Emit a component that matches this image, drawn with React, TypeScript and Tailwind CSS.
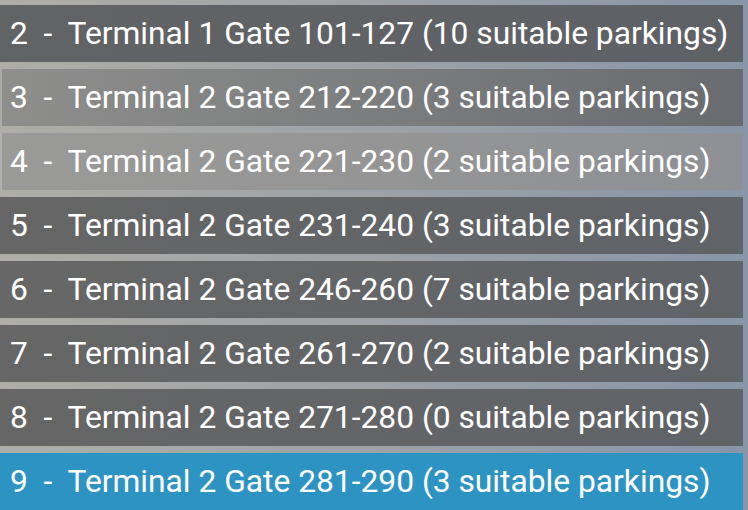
const rows = [
  { n: 2, label: 'Terminal 1 Gate 101-127', count: 10, cls: 'pl-[10px] bg-gradient-to-r from-[#626365] to-[#5e6166]' },
  { n: 3, label: 'Terminal 2 Gate 212-220', count: 3, cls: 'pl-[8px] bg-gradient-to-r from-[#8e8e8d] via-[#7c7d7e] to-[#696b70] border-l-2 border-[#a9a9a7]' },
  { n: 4, label: 'Terminal 2 Gate 221-230', count: 2, cls: 'pl-[8px] bg-gradient-to-r from-[#9a9a99] via-[#959595] to-[#8e9095] border-l-2 border-[#b0b0ae]' },
  { n: 5, label: 'Terminal 2 Gate 231-240', count: 3, cls: 'pl-[10px] bg-gradient-to-r from-[#666666] to-[#606368]' },
  { n: 6, label: 'Terminal 2 Gate 246-260', count: 7, cls: 'pl-[10px] bg-gradient-to-r from-[#676767] to-[#606368]' },
  { n: 7, label: 'Terminal 2 Gate 261-270', count: 2, cls: 'pl-[10px] bg-gradient-to-r from-[#666666] to-[#606368]' },
  { n: 8, label: 'Terminal 2 Gate 271-280', count: 0, cls: 'pl-[10px] bg-gradient-to-r from-[#666666] to-[#606368]' },
  { n: 9, label: 'Terminal 2 Gate 281-290', count: 3, cls: 'pl-[10px] bg-[#2d93c3]' },
];

export default function App() {
  return (
    <div className="w-[748px] h-[510px] overflow-hidden bg-gradient-to-r from-[#aeada8] via-[#9ea2a6] to-[#8795a8] pt-[5px] pr-[5px] flex flex-col gap-[7px]"
      style={{ fontFamily: 'Roboto, "Liberation Sans", sans-serif' }}>
      {rows.map(r => (
        <div key={r.n} className={`h-[57px] shrink-0 flex items-center text-white text-[31.75px] whitespace-pre leading-none ${r.cls}`}>
          {`${r.n}  -  ${r.label} (${r.count} suitable parkings)`}
        </div>
      ))}
    </div>
  );
}
